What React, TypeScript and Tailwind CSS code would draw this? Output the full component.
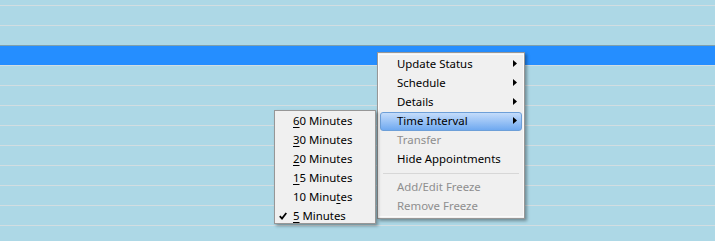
import { Fragment } from 'react'

const font = { fontFamily: '"Noto Sans", "Open Sans", sans-serif' }

type Item = { label: string; arrow?: boolean; disabled?: boolean; active?: boolean; sep?: boolean }

const mainItems: Item[] = [
  { label: 'Update Status', arrow: true },
  { label: 'Schedule', arrow: true },
  { label: 'Details', arrow: true },
  { label: 'Time Interval', arrow: true, active: true },
  { label: 'Transfer', disabled: true },
  { label: 'Hide Appointments' },
  { label: '', sep: true },
  { label: 'Add/Edit Freeze', disabled: true },
  { label: 'Remove Freeze', disabled: true },
]

const subItems: { label: string; u: number; checked?: boolean }[] = [
  { label: '60 Minutes', u: 0 },
  { label: '30 Minutes', u: 0 },
  { label: '20 Minutes', u: 0 },
  { label: '15 Minutes', u: 0 },
  { label: '10 Minutes', u: 7 },
  { label: '5 Minutes', u: 0, checked: true },
]

function Mnemonic({ text, at }: { text: string; at: number }) {
  return (
    <>
      {text.slice(0, at)}
      <span className="underline underline-offset-[2px] decoration-1">{text[at]}</span>
      {text.slice(at + 1)}
    </>
  )
}

function Arrow() {
  return (
    <svg width="4" height="7" viewBox="0 0 4 7" className="shrink-0">
      <path d="M0 0 L4 3.5 L0 7 Z" fill="#000" />
    </svg>
  )
}

function Check() {
  return (
    <svg width="8" height="8" viewBox="0 0 8 8">
      <path d="M0.8 4.2 L3 6.6 L7.3 1" stroke="#000" strokeWidth="1.8" fill="none" />
    </svg>
  )
}

function Rows() {
  const rows = Array.from({ length: 12 }, (_, i) => i)
  return (
    <div className="flex flex-col pt-[5px]">
      {rows.map(i => (
        <Fragment key={i}>
          <div className={`h-px shrink-0 ${i === 2 ? 'bg-[#7d9fac]' : 'bg-[#d2dde1]'}`} />
          <div className={`h-[19px] shrink-0 ${i === 2 ? 'bg-[#258eff]' : 'bg-[#add8e6]'}`} />
        </Fragment>
      ))}
    </div>
  )
}

export default function App() {
  return (
    <div className="relative w-[715px] h-[241px] overflow-hidden bg-[#add8e6] text-[11.4px]" style={font}>
      <Rows />

      {/* context menu */}
      <div className="absolute left-[377px] top-[52px] w-[148px] border border-[#979797] bg-[#f0f0f0] py-[1px] shadow-[2px_2px_3px_rgba(0,0,0,0.35)]">
        <div className="flex flex-col border border-white/70">
          {mainItems.map((it, i) =>
            it.sep ? (
              <div key={i} className="h-[9px] flex items-center px-[4px]">
                <div className="w-full h-px bg-[#d7d7d7]" />
              </div>
            ) : (
              <div key={i}
                className={`flex items-center h-[19px] mx-[1px] pl-[16px] pr-[4px] pb-[2px] rounded-[3px] border ${it.active
                  ? 'border-[#6d9fd8] bg-gradient-to-b from-[#c4dcfa] to-[#6fa9f0]'
                  : 'border-transparent'} ${it.disabled ? 'text-[#8e8e8e]' : 'text-black'}`}>
                <span className="flex-1 leading-[16px]">{it.label}</span>
                {it.arrow && <Arrow />}
              </div>
            )
          )}
        </div>
      </div>

      {/* submenu */}
      <div className="absolute left-[274px] top-[110px] w-[102px] h-[114px] overflow-hidden flex flex-col border border-[#979797] bg-[#f0f0f0] shadow-[2px_2px_3px_rgba(0,0,0,0.35)]">
        {subItems.map((it, i) => (
          <div key={i} className="flex items-center h-[19px] shrink-0 text-black">
            <div className="w-[18px] flex pl-[4px]">{it.checked && <Check />}</div>
            <span className="leading-[16px]"><Mnemonic text={it.label} at={it.u} /></span>
          </div>
        ))}
      </div>
    </div>
  )
}
